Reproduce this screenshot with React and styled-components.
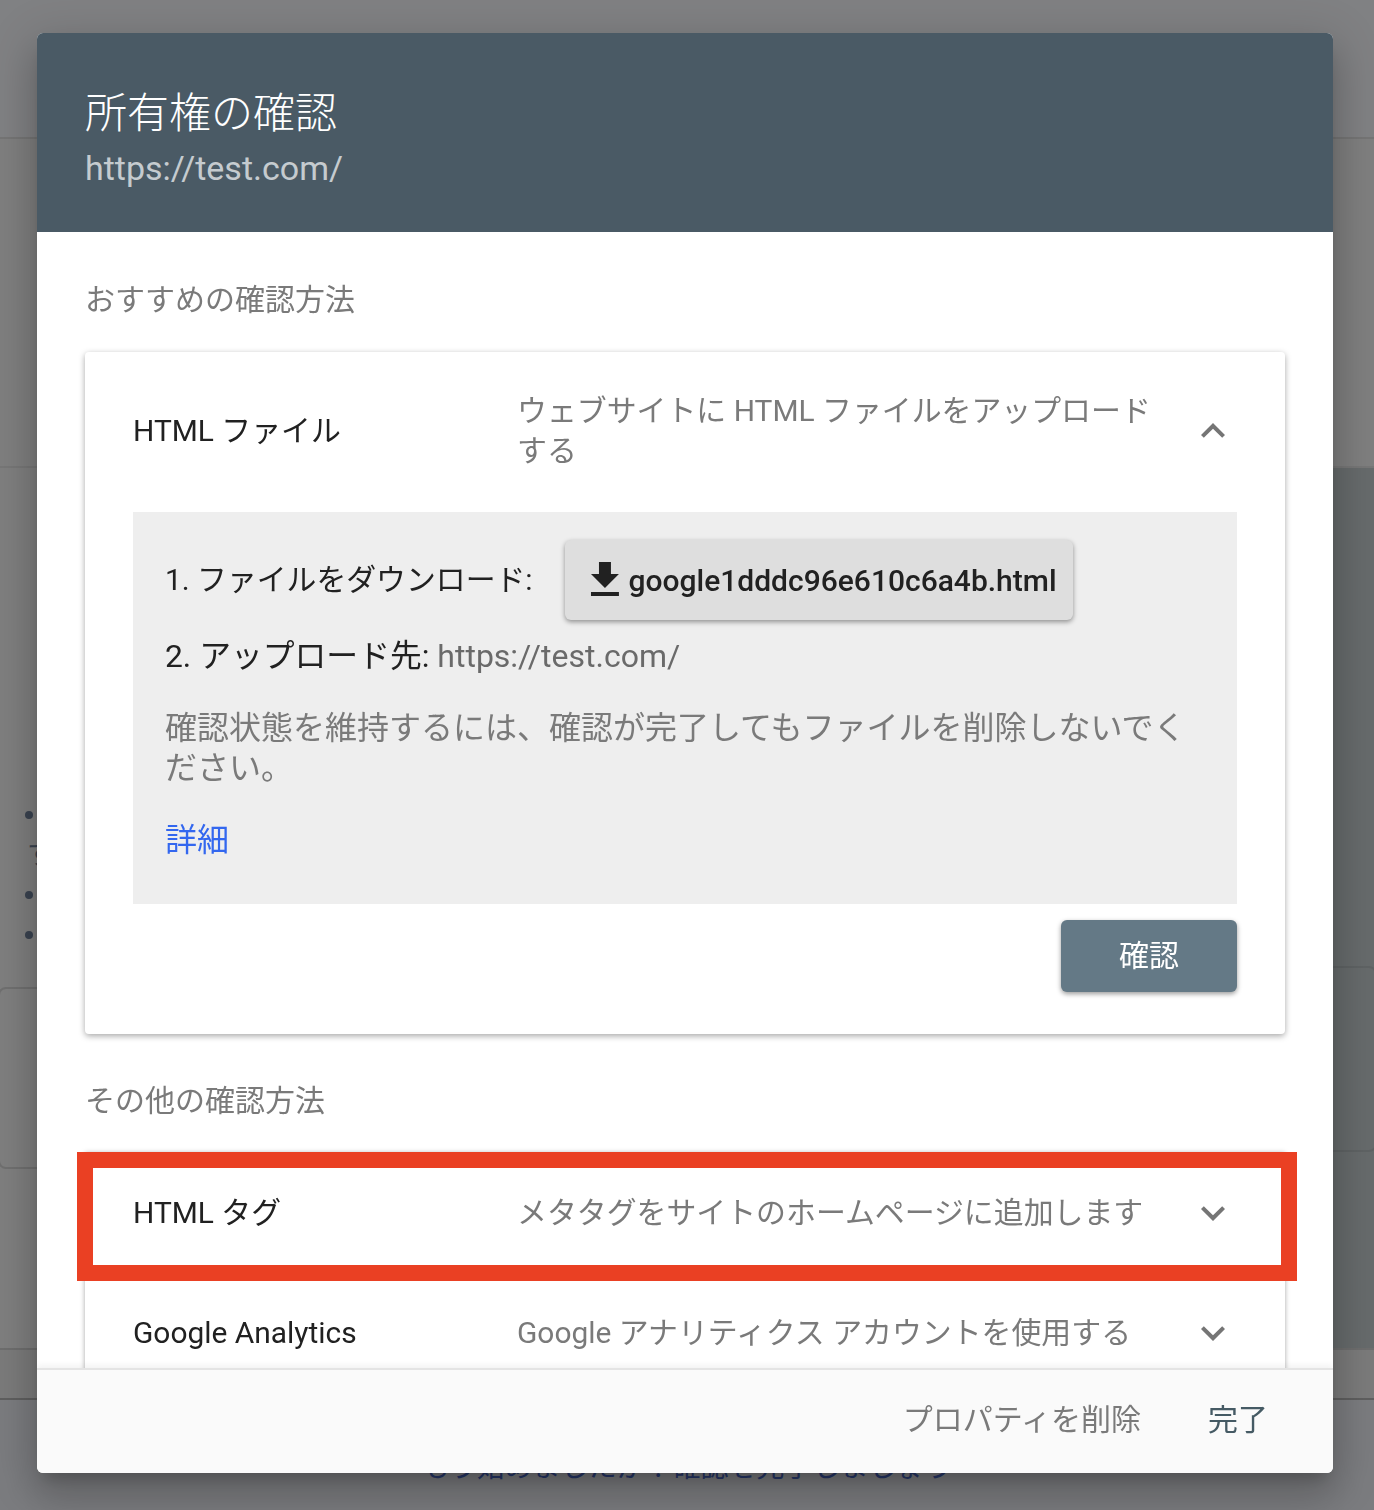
import React from "react";
import styled, { createGlobalStyle } from "styled-components";

const FONT = `Roboto, "Noto Sans CJK JP", sans-serif`;

const GlobalStyle = createGlobalStyle`
  html, body {
    margin: 0;
    padding: 0;
    background: #7f7f7f;
  }
  * {
    box-sizing: border-box;
  }
`;

const ChevronUp = () => (
  <svg width="48" height="48" viewBox="0 0 24 24" fill="#757575">
    <path d="M12 8l-6 6 1.41 1.41L12 10.83l4.59 4.58L18 14z" />
  </svg>
);

const ChevronDown = () => (
  <svg width="48" height="48" viewBox="0 0 24 24" fill="#757575">
    <path d="M16.59 8.59L12 13.17 7.41 8.59 6 10l6 6 6-6z" />
  </svg>
);

const DownloadIcon = () => (
  <svg width="48" height="48" viewBox="0 0 24 24" fill="#212121">
    <path d="M19 9h-4V3H9v6H5l7 7 7-7zM5 18v2h14v-2H5z" />
  </svg>
);

const App = () => {
  return (
    <>
      <GlobalStyle />
      <Page>
        {/* page behind the dialog */}
        <TopBar />
        <Intro />
        <Main>
          <Bullets>
            <BulletRow>
              <Bullet />
            </BulletRow>
            <BulletRow>
              <BulletNote>す</BulletNote>
            </BulletRow>
            <BulletRow>
              <Bullet />
            </BulletRow>
            <BulletRow>
              <Bullet />
            </BulletRow>
          </Bullets>
          <Outline />
          <RightCard />
        </Main>
        <FooterBand />
        <BehindLink>もう始めましたか？確認を完了しましょう</BehindLink>
      </Page>

      <Dialog>
        <Header>
          <Title>所有権の確認</Title>
          <Subtitle>https://test.com/</Subtitle>
        </Header>

        <Body>
          <SectionLabel>おすすめの確認方法</SectionLabel>

          <OpenCard>
            <RowHead>
              <RowTitle>HTML ファイル</RowTitle>
              <RowDesc>ウェブサイトに HTML ファイルをアップロードする</RowDesc>
              <RowIcon>
                <ChevronUp />
              </RowIcon>
            </RowHead>

            <Steps>
              <StepLine>
                <StepText>1. ファイルをダウンロード:</StepText>
                <DownloadButton>
                  <DownloadIcon />
                  google1dddc96e610c6a4b.html
                </DownloadButton>
              </StepLine>
              <UploadLine>
                2. アップロード先: <Muted>https://test.com/</Muted>
              </UploadLine>
              <Notice>
                確認状態を維持するには、確認が完了してもファイルを削除しないでください。
              </Notice>
              <MoreLink href="#">詳細</MoreLink>
            </Steps>

            <Actions>
              <VerifyButton>確認</VerifyButton>
            </Actions>
          </OpenCard>

          <SectionLabel $other>その他の確認方法</SectionLabel>

          <ClosedCard>
            <ClosedRow>
              <RowTitle>HTML タグ</RowTitle>
              <RowDesc>メタタグをサイトのホームページに追加します</RowDesc>
              <RowIcon>
                <ChevronDown />
              </RowIcon>
              <Highlight />
            </ClosedRow>
            <ClosedRow>
              <RowTitle>Google Analytics</RowTitle>
              <RowDesc>Google アナリティクス アカウントを使用する</RowDesc>
              <RowIcon>
                <ChevronDown />
              </RowIcon>
            </ClosedRow>
          </ClosedCard>
        </Body>

        <Footer>
          <FooterButton>プロパティを削除</FooterButton>
          <FooterButton $primary>完了</FooterButton>
        </Footer>
      </Dialog>
    </>
  );
};

export default App;

const Page = styled.div`
  width: 1374px;
  height: 1510px;
  overflow: hidden;
  background: #7f7f7f;
  font-family: ${FONT};
  display: flex;
  flex-direction: column;
`;

const TopBar = styled.div`
  height: 139px;
  flex: none;
  background: #808183;
  border-bottom: 2px solid #757575;
`;

const Intro = styled.div`
  height: 329px;
  flex: none;
  background: #7f7f7f;
  border-bottom: 2px solid #777777;
`;

const Main = styled.div`
  height: 880px;
  flex: none;
  position: relative;
  display: flex;
  background: #7f7f7f;
`;

const Bullets = styled.div`
  position: absolute;
  left: 25px;
  top: 327px;
  display: flex;
  flex-direction: column;
`;

const BulletRow = styled.div`
  height: 40px;
  display: flex;
  align-items: center;
`;

const Bullet = styled.span`
  width: 8px;
  height: 8px;
  border-radius: 50%;
  background: #3a4350;
`;

const BulletNote = styled.span`
  margin-left: 2px;
  font-size: 28px;
  line-height: 40px;
  color: #3a4350;
`;

const Outline = styled.div`
  position: absolute;
  left: -2px;
  top: 519px;
  width: 80px;
  height: 182px;
  border: 2px solid #707070;
  border-radius: 8px;
`;

const RightCard = styled.div`
  position: absolute;
  right: 0;
  top: 0;
  width: 60px;
  height: 100%;
  background: #676b6c;

  &::after {
    content: "";
    position: absolute;
    top: 498px;
    left: -20px;
    width: 79px;
    height: 182px;
    border: 2px solid #5f6364;
    border-radius: 8px;
  }
`;

const FooterBand = styled.div`
  height: 52px;
  flex: none;
  background: #7b7b7b;
  border-top: 2px solid #6e6e6e;
  border-bottom: 2px solid #5f5f5f;
`;

const BehindLink = styled.div`
  flex: 1;
  padding-top: 48px;
  text-align: center;
  background: #7b7c7f;
  color: #27386b;
  font-size: 28px;
  line-height: 40px;
`;

const Dialog = styled.div`
  position: fixed;
  left: 37px;
  top: 33px;
  width: 1296px;
  height: 1440px;
  display: flex;
  flex-direction: column;
  overflow: hidden;
  background: #ffffff;
  border-radius: 6px;
  box-shadow: 0 24px 38px 3px rgba(0, 0, 0, 0.14),
    0 9px 46px 8px rgba(0, 0, 0, 0.12), 0 11px 15px -7px rgba(0, 0, 0, 0.2);
  font-family: ${FONT};
`;

const Header = styled.div`
  height: 199px;
  flex: none;
  padding: 54px 48px 0;
  background: #4a5a65;
`;

const Title = styled.div`
  font-size: 42px;
  font-weight: 300;
  line-height: 54px;
  color: #ffffff;
`;

const Subtitle = styled.div`
  margin-top: 6px;
  font-size: 34px;
  font-weight: 400;
  line-height: 42px;
  color: #c5cbcf;
`;

const Body = styled.div`
  flex: 1;
  min-height: 0;
  overflow: hidden;
  padding: 0 48px;
`;

const SectionLabel = styled.div`
  padding-top: ${(p) => (p.$other ? "47px" : "48px")};
  font-size: 30px;
  font-weight: 400;
  line-height: 40px;
  color: #7a7a7a;
  margin-bottom: ${(p) => (p.$other ? "31px" : "32px")};
`;

const OpenCard = styled.div`
  height: 682px;
  background: #ffffff;
  border-radius: 4px;
  box-shadow: 0 2px 6px rgba(0, 0, 0, 0.35);
  padding: 0 48px;
`;

const RowHead = styled.div`
  height: 160px;
  padding-bottom: 2px;
  display: flex;
  align-items: center;
`;

const RowTitle = styled.div`
  width: 384px;
  flex: none;
  font-size: 29.9px;
  font-weight: 400;
  line-height: 40px;
  color: #212121;
`;

const RowDesc = styled.div`
  width: 650px;
  flex: none;
  font-size: 29.9px;
  font-weight: 400;
  line-height: 40px;
  color: #7a7a7a;
`;

const RowIcon = styled.div`
  margin-left: auto;
  width: 48px;
  height: 48px;
`;

const Steps = styled.div`
  height: 392px;
  padding: 28px 32px 0;
  background: #eeeeee;
`;

const StepLine = styled.div`
  display: flex;
  align-items: center;
  height: 80px;
`;

const StepText = styled.div`
  font-size: 29.85px;
  font-weight: 400;
  line-height: 40px;
  color: #212121;
`;

const DownloadButton = styled.button`
  display: flex;
  align-items: center;
  width: 508px;
  height: 80px;
  margin-left: 32px;
  padding: 0 16px;
  border: 0;
  border-radius: 6px;
  background: #dedede;
  box-shadow: 0 2px 5px rgba(0, 0, 0, 0.4);
  font-family: ${FONT};
  font-size: 30px;
  font-weight: 500;
  color: #212121;
  white-space: nowrap;
`;

const UploadLine = styled.div`
  margin-top: 16px;
  font-size: 31.8px;
  font-weight: 400;
  line-height: 40px;
  color: #212121;
`;

const Muted = styled.span`
  color: #6a6a6a;
  font-size: 32px;
`;

const Notice = styled.div`
  margin-top: 32px;
  font-size: 32px;
  font-weight: 400;
  line-height: 40px;
  color: #7a7a7a;
`;

const MoreLink = styled.a`
  display: block;
  margin-top: 32px;
  font-size: 32px;
  font-weight: 400;
  line-height: 40px;
  color: #3367ef;
  text-decoration: none;
`;

const Actions = styled.div`
  display: flex;
  justify-content: flex-end;
  padding-top: 16px;
`;

const VerifyButton = styled.button`
  width: 176px;
  height: 72px;
  border: 0;
  border-radius: 6px;
  background: #647986;
  box-shadow: 0 2px 5px rgba(0, 0, 0, 0.4);
  font-family: ${FONT};
  font-size: 30px;
  font-weight: 400;
  line-height: 40px;
  color: #ffffff;
`;

const ClosedCard = styled.div`
  background: #ffffff;
  box-shadow: 0 1px 5px rgba(0, 0, 0, 0.35);
`;

const ClosedRow = styled.div`
  position: relative;
  height: 120px;
  padding: 2px 48px 0;
  display: flex;
  align-items: center;
`;

/* red annotation drawn over the row */
const Highlight = styled.div`
  position: absolute;
  left: -8px;
  right: -12px;
  top: 0;
  bottom: -9px;
  border: 16px solid #ea4023;
`;

const Footer = styled.div`
  height: 105px;
  flex: none;
  position: relative;
  display: flex;
  align-items: center;
  justify-content: flex-end;
  gap: 67px;
  padding: 0 65px 4px 0;
  background: #fafafa;
  border-top: 2px solid #e4e4e4;
  box-shadow: 0 -3px 6px rgba(0, 0, 0, 0.05);
`;

const FooterButton = styled.button`
  padding: 0;
  border: 0;
  background: none;
  font-family: ${FONT};
  font-size: 30px;
  font-weight: 400;
  line-height: 40px;
  color: ${(p) => (p.$primary ? "#455a64" : "#7a7a7a")};
`;
